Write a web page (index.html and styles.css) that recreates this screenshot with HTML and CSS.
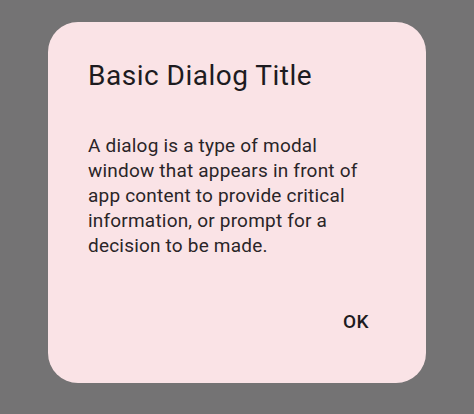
FILE: index.html
```html
<!DOCTYPE html>
<html lang="en">
<head>
<meta charset="utf-8">
<title>Basic Dialog</title>
<link rel="stylesheet" href="styles.css">
</head>
<body>
<div class="scrim">
  <div class="dialog" role="dialog" aria-labelledby="dlg-title">
    <h2 class="dialog-title" id="dlg-title">Basic Dialog Title</h2>
    <p class="dialog-body">A dialog is a type of modal window that appears in front of app content to provide critical information, or prompt for a decision to be made.</p>
    <div class="dialog-actions">
      <button class="text-button" type="button">OK</button>
    </div>
  </div>
</div>
</body>
</html>
```

FILE: styles.css
```css
html, body {
  margin: 0;
  padding: 0;
  height: 100%;
}
body {
  background: #747374;
  font-family: Roboto, "Noto Sans", "Liberation Sans", sans-serif;
}
.scrim {
  box-sizing: border-box;
  height: 100%;
  padding: 22px 48px 0 48px;
}
.dialog {
  box-sizing: border-box;
  width: 378px;
  height: 361px;
  background: #fae3e6;
  border-radius: 30px;
  padding: 38px 45px 0 40px;
  display: flex;
  flex-direction: column;
}
.dialog-title {
  margin: 0;
  font-size: 28px;
  font-weight: 400;
  line-height: 32px;
  letter-spacing: 0.5px;
  color: #1d1b20;
}
.dialog-body {
  margin: 41px 0 0 0;
  max-width: 285px;
  font-size: 19px;
  line-height: 25px;
  letter-spacing: 0.2px;
  color: #2a2528;
}
.dialog-actions {
  display: flex;
  justify-content: flex-end;
  margin-top: 44px;
}
.text-button {
  border: 0;
  background: transparent;
  font-family: inherit;
  font-size: 19px;
  font-weight: 500;
  line-height: 20px;
  letter-spacing: 0.5px;
  color: #1d1b20;
  padding: 10px 12px;
  cursor: pointer;
}
```
